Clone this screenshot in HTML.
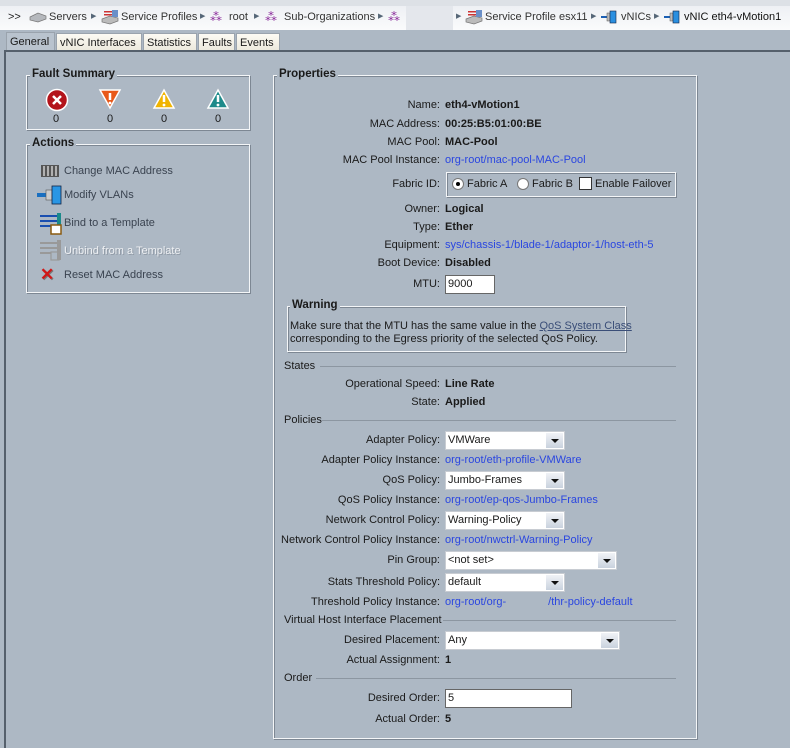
<!DOCTYPE html>
<html><head><meta charset="utf-8"><style>
*{margin:0;padding:0;box-sizing:border-box}
body{width:790px;height:748px;overflow:hidden;background:#adb8c4;font-family:"Liberation Sans",sans-serif;font-size:11px;color:#1a1a1a;position:relative}
.a{position:absolute;white-space:nowrap}
.l{position:absolute;right:350px;white-space:nowrap;text-align:right}
.v{position:absolute;left:445px;white-space:nowrap}
.b{font-weight:bold}
.k{color:#2a46e0}
.box{position:absolute;border:1px solid #f4f6f8;box-shadow:inset 1px 1px 0 #7d8793, 1px 1px 0 #7d8793}
.leg{position:absolute;background:#adb8c4;font-weight:bold;padding:0 2px;font-size:11.5px}
.sel{position:absolute;left:445px;height:19px;background:#fff;border:1px solid #c8ccd2;padding:2px 0 0 2px}
.sel i{position:absolute;right:1px;top:1px;width:17px;height:15px;background:linear-gradient(#f0f2f6,#c9d2de)}
.sel i:after{content:"";position:absolute;left:5px;top:6px;border:4px solid transparent;border-top:4px solid #111;border-bottom:0}
.sec{position:absolute;left:284px}
.hr{position:absolute;height:1px;background:#f4f6f8;border-top:1px solid #8c96a1}
.tab{position:absolute;top:33px;height:18px;background:linear-gradient(#fdfbf4,#ece8dc);border:1px solid #9aa3ad;border-bottom:0;padding:3px 3px 0;font-size:11px}
.act{position:absolute;left:64px;color:#3a4350}
.bc{top:11px;color:#333}
</style></head><body>
<div class="a" style="left:0;top:0;width:790px;height:6px;background:#dde1e6"></div>
<div class="a" style="left:0;top:6px;width:790px;height:24px;background:linear-gradient(#eef0f4,#fafbfc)"></div>
<div class="a" style="left:406px;top:6px;width:47px;height:24px;background:#e4e7ec"></div>
<div class="a bc" style="left:8px;color:#222">&gt;&gt;</div>
<svg class="a" style="left:29px;top:11px" width="18" height="12"><path d="M1 6 L9 2 L17 5 L17 8 L9 11 L1 9Z" fill="#b5b8bd" stroke="#777" stroke-width=".7"/></svg>
<div class="a bc" style="left:49px">Servers</div>
<div class="a" style="left:91px;top:12px;font-size:7px;color:#567">▶</div>
<svg class="a" style="left:101px;top:9px" width="18" height="16"><path d="M1 10 L9 7 L17 9 L17 12 L9 15 L1 13Z" fill="#bbb" stroke="#777" stroke-width=".7"/><rect x="3" y="2" width="8" height="1.5" fill="#c33"/><rect x="3" y="5" width="8" height="1.5" fill="#c33"/><rect x="11" y="1" width="6" height="7" fill="#6a8fc8"/></svg>
<div class="a bc" style="left:121px">Service Profiles</div>
<div class="a" style="left:200px;top:12px;font-size:7px;color:#567">▶</div>
<div class="a" style="left:210px;top:10px;color:#8a2a9a;font-size:12px">⁂</div>
<div class="a bc" style="left:229px">root</div>
<div class="a" style="left:254px;top:12px;font-size:7px;color:#567">▶</div>
<div class="a" style="left:265px;top:10px;color:#8a2a9a;font-size:12px">⁂</div>
<div class="a bc" style="left:284px">Sub-Organizations</div>
<div class="a" style="left:378px;top:12px;font-size:7px;color:#567">▶</div>
<div class="a" style="left:388px;top:10px;color:#8a2a9a;font-size:12px">⁂</div>
<div class="a" style="left:456px;top:12px;font-size:7px;color:#567">▶</div>
<svg class="a" style="left:465px;top:9px" width="18" height="16"><path d="M1 10 L9 7 L17 9 L17 12 L9 15 L1 13Z" fill="#bbb" stroke="#777" stroke-width=".7"/><rect x="3" y="2" width="8" height="1.5" fill="#c33"/><rect x="3" y="5" width="8" height="1.5" fill="#c33"/><rect x="11" y="1" width="6" height="7" fill="#6a8fc8"/></svg>
<div class="a bc" style="left:485px">Service Profile esx11</div>
<div class="a" style="left:591px;top:12px;font-size:7px;color:#567">▶</div>
<svg class="a" style="left:601px;top:10px" width="16" height="14"><rect x="0" y="6" width="7" height="2" fill="#1a5fb4"/><rect x="6" y="3" width="3" height="8" fill="#bbb" stroke="#555" stroke-width=".5"/><rect x="9" y="1" width="6" height="12" fill="#2a8fe0" stroke="#124" stroke-width=".6"/></svg>
<div class="a bc" style="left:621px">vNICs</div>
<div class="a" style="left:654px;top:12px;font-size:7px;color:#567">▶</div>
<svg class="a" style="left:664px;top:10px" width="16" height="14"><rect x="0" y="6" width="7" height="2" fill="#1a5fb4"/><rect x="6" y="3" width="3" height="8" fill="#bbb" stroke="#555" stroke-width=".5"/><rect x="9" y="1" width="6" height="12" fill="#2a8fe0" stroke="#124" stroke-width=".6"/></svg>
<div class="a bc" style="left:684px;color:#111">vNIC eth4-vMotion1</div>

<div class="tab" style="left:6px;width:49px;top:32px;height:19px;background:#b9c3ce">General</div>
<div class="tab" style="left:56px;width:86px">vNIC Interfaces</div>
<div class="tab" style="left:143px;width:54px">Statistics</div>
<div class="tab" style="left:198px;width:37px">Faults</div>
<div class="tab" style="left:236px;width:44px">Events</div>
<div class="a" style="left:4px;top:50px;width:786px;height:3px;border-top:2px solid #55606c;border-left:2px solid #55606c;background:#adb8c4"></div>
<div class="a" style="left:4px;top:50px;width:2px;height:698px;background:#55606c"></div>

<div class="box" style="left:26px;top:75px;width:224px;height:55px"></div>
<div class="leg" style="left:30px;top:68px">Fault Summary</div>
<svg class="a" style="left:45px;top:88px" width="24" height="24"><circle cx="12" cy="12" r="10.5" fill="#b3141b" stroke="#fff" stroke-width="1.5"/><path d="M8 8L16 16M16 8L8 16" stroke="#fff" stroke-width="2.5"/></svg>
<svg class="a" style="left:98px;top:88px" width="24" height="22"><path d="M2 2H22L12 20Z" fill="#e8591a" stroke="#fff" stroke-width="1.5"/><path d="M12 5V12" stroke="#fff" stroke-width="2.5"/><circle cx="12" cy="15" r="1.4" fill="#fff"/></svg>
<svg class="a" style="left:152px;top:88px" width="24" height="22"><path d="M12 2L22 20H2Z" fill="#f0b400" stroke="#fff" stroke-width="1.5"/><path d="M12 7V14" stroke="#fff" stroke-width="2.5"/><circle cx="12" cy="17" r="1.4" fill="#fff"/></svg>
<svg class="a" style="left:206px;top:88px" width="24" height="22"><path d="M12 2L22 20H2Z" fill="#1d8a8a" stroke="#fff" stroke-width="1.5"/><path d="M12 7V14" stroke="#fff" stroke-width="2.5"/><circle cx="12" cy="17" r="1.4" fill="#fff"/></svg>
<div class="a" style="left:53px;top:113px">0</div><div class="a" style="left:107px;top:113px">0</div><div class="a" style="left:161px;top:113px">0</div><div class="a" style="left:215px;top:113px">0</div>

<div class="box" style="left:26px;top:144px;width:224px;height:149px"></div>
<div class="leg" style="left:30px;top:137px">Actions</div>
<svg class="a" style="left:40px;top:164px" width="20" height="14"><rect x="1" y="1" width="18" height="12" fill="#555"/><path d="M4 2V12M8 2V12M12 2V12M16 2V12" stroke="#eee" stroke-width="1.2"/></svg>
<div class="act" style="top:165px">Change MAC Address</div>
<svg class="a" style="left:37px;top:185px" width="25" height="20"><rect x="0" y="8" width="10" height="4" fill="#1a6fc0"/><rect x="9" y="5" width="6" height="10" fill="#ccc" stroke="#555" stroke-width=".6"/><rect x="15" y="1" width="9" height="18" fill="#2a96e4" stroke="#124" stroke-width=".8"/></svg>
<div class="act" style="top:189px">Modify VLANs</div>
<svg class="a" style="left:39px;top:213px" width="24" height="22"><path d="M1 3H18M1 8H18M1 13H12" stroke="#1a4fb0" stroke-width="2"/><rect x="18" y="0" width="4" height="14" fill="#1a8a8a"/><rect x="12" y="12" width="10" height="9" fill="#fff" stroke="#8a5a10" stroke-width="1.5"/></svg>
<div class="act" style="top:217px">Bind to a Template</div>
<svg class="a" style="left:39px;top:240px" width="24" height="22"><path d="M1 3H18M1 8H18M1 13H12" stroke="#999" stroke-width="2"/><rect x="18" y="0" width="4" height="20" fill="#999"/><rect x="12" y="12" width="8" height="8" fill="none" stroke="#999" stroke-width="1.2"/></svg>
<div class="act" style="top:245px;color:#eef0f3;text-shadow:1px 1px 0 #8e98a4">Unbind from a Template</div>
<div class="a" style="left:40px;top:265px;color:#d01818;font-size:17px;font-weight:bold;text-shadow:1px 1px 0 #777">✕</div>
<div class="act" style="top:269px">Reset MAC Address</div>

<div class="box" style="left:273px;top:75px;width:424px;height:664px"></div>
<div class="leg" style="left:277px;top:68px">Properties</div>

<div class="l" style="top:99px">Name:</div><div class="v b" style="top:99px">eth4-vMotion1</div>
<div class="l" style="top:118px">MAC Address:</div><div class="v b" style="top:118px">00:25:B5:01:00:BE</div>
<div class="l" style="top:136px">MAC Pool:</div><div class="v b" style="top:136px">MAC-Pool</div>
<div class="l" style="top:154px">MAC Pool Instance:</div><div class="v k" style="top:154px">org-root/mac-pool-MAC-Pool</div>
<div class="l" style="top:178px">Fabric ID:</div>
<div class="box" style="left:446px;top:172px;width:230px;height:25px"></div>
<div class="a" style="left:452px;top:178px;width:12px;height:12px;border-radius:50%;background:#fff;border:1px solid #777"></div><div class="a" style="left:456px;top:182px;width:4px;height:4px;border-radius:50%;background:#000"></div>
<div class="a" style="left:467px;top:178px">Fabric A</div>
<div class="a" style="left:517px;top:178px;width:12px;height:12px;border-radius:50%;background:#fff;border:1px solid #777"></div>
<div class="a" style="left:532px;top:178px">Fabric B</div>
<div class="a" style="left:579px;top:177px;width:13px;height:13px;background:#fff;border:1px solid #333"></div>
<div class="a" style="left:595px;top:178px">Enable Failover</div>
<div class="l" style="top:203px">Owner:</div><div class="v b" style="top:203px">Logical</div>
<div class="l" style="top:221px">Type:</div><div class="v b" style="top:221px">Ether</div>
<div class="l" style="top:239px">Equipment:</div><div class="v k" style="top:239px">sys/chassis-1/blade-1/adaptor-1/host-eth-5</div>
<div class="l" style="top:257px">Boot Device:</div><div class="v b" style="top:257px">Disabled</div>
<div class="l" style="top:278px">MTU:</div>
<div class="a" style="left:445px;top:275px;width:50px;height:19px;background:#fff;border:1px solid #666;padding:2px 0 0 2px">9000</div>

<div class="box" style="left:287px;top:306px;width:339px;height:46px"></div>
<div class="leg" style="left:290px;top:299px">Warning</div>
<div class="a" style="left:290px;top:320px">Make sure that the MTU has the same value in the <span style="color:#3a4e78;text-decoration:underline">QoS System Class</span></div>
<div class="a" style="left:290px;top:333px">corresponding to the Egress priority of the selected QoS Policy.</div>

<div class="sec" style="top:360px">States</div><div class="hr" style="left:320px;top:366px;width:356px"></div>
<div class="l" style="top:378px">Operational Speed:</div><div class="v b" style="top:378px">Line Rate</div>
<div class="l" style="top:396px">State:</div><div class="v b" style="top:396px">Applied</div>
<div class="sec" style="top:414px">Policies</div><div class="hr" style="left:322px;top:420px;width:354px"></div>
<div class="l" style="top:434px">Adapter Policy:</div><div class="sel" style="top:431px;width:120px">VMWare<i></i></div>
<div class="l" style="top:454px">Adapter Policy Instance:</div><div class="v k" style="top:454px">org-root/eth-profile-VMWare</div>
<div class="l" style="top:474px">QoS Policy:</div><div class="sel" style="top:471px;width:120px">Jumbo-Frames<i></i></div>
<div class="l" style="top:494px">QoS Policy Instance:</div><div class="v k" style="top:494px">org-root/ep-qos-Jumbo-Frames</div>
<div class="l" style="top:514px">Network Control Policy:</div><div class="sel" style="top:511px;width:120px">Warning-Policy<i></i></div>
<div class="l" style="top:534px">Network Control Policy Instance:</div><div class="v k" style="top:534px">org-root/nwctrl-Warning-Policy</div>
<div class="l" style="top:554px">Pin Group:</div><div class="sel" style="top:551px;width:172px">&lt;not set&gt;<i></i></div>
<div class="l" style="top:576px">Stats Threshold Policy:</div><div class="sel" style="top:573px;width:120px">default<i></i></div>
<div class="l" style="top:596px">Threshold Policy Instance:</div><div class="v k" style="top:596px">org-root/org-<span style="margin-left:42px">/thr-policy-default</span></div>
<div class="sec" style="top:614px">Virtual Host Interface Placement</div><div class="hr" style="left:443px;top:620px;width:233px"></div>
<div class="l" style="top:634px">Desired Placement:</div><div class="sel" style="top:631px;width:175px">Any<i></i></div>
<div class="l" style="top:654px">Actual Assignment:</div><div class="v b" style="top:654px">1</div>
<div class="sec" style="top:672px">Order</div><div class="hr" style="left:316px;top:678px;width:360px"></div>
<div class="l" style="top:692px">Desired Order:</div>
<div class="a" style="left:445px;top:689px;width:127px;height:19px;background:#fff;border:1px solid #666;padding:2px 0 0 2px">5</div>
<div class="l" style="top:713px">Actual Order:</div><div class="v b" style="top:713px">5</div>
</body></html>
